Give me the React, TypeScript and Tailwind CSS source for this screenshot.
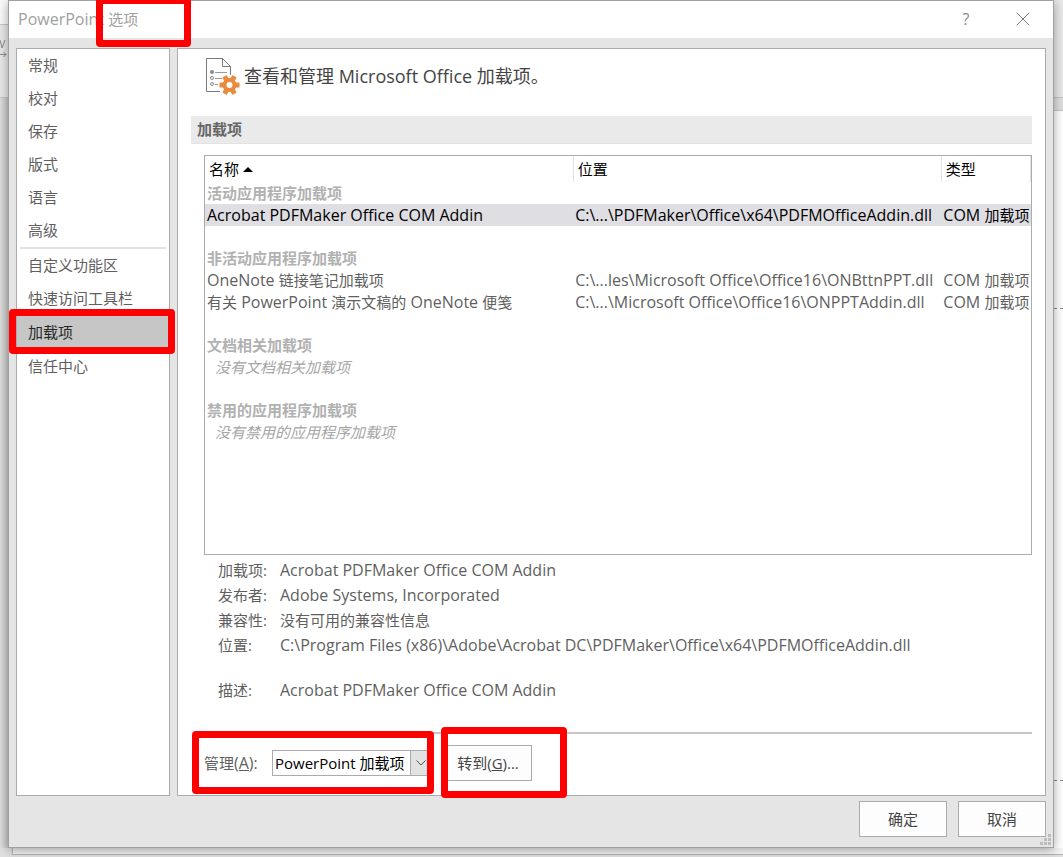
import { useState } from 'react'
import { X } from 'lucide-react'

type Row =
  | { kind: 'group'; name: string }
  | { kind: 'addin'; name: string; location: string; type: string }
  | { kind: 'empty'; name: string }
  | { kind: 'gap' }

const mainTabs = ['常规', '校对', '保存', '版式', '语言', '高级']
const extraTabs = ['自定义功能区', '快速访问工具栏', '加载项', '信任中心']

const rows: Row[] = [
  { kind: 'group', name: '活动应用程序加载项' },
  { kind: 'addin', name: 'Acrobat PDFMaker Office COM Addin', location: 'C:\\...\\PDFMaker\\Office\\x64\\PDFMOfficeAddin.dll', type: 'COM 加载项' },
  { kind: 'gap' },
  { kind: 'group', name: '非活动应用程序加载项' },
  { kind: 'addin', name: 'OneNote 链接笔记加载项', location: 'C:\\...les\\Microsoft Office\\Office16\\ONBttnPPT.dll', type: 'COM 加载项' },
  { kind: 'addin', name: '有关 PowerPoint 演示文稿的 OneNote 便笺', location: 'C:\\...\\Microsoft Office\\Office16\\ONPPTAddin.dll', type: 'COM 加载项' },
  { kind: 'gap' },
  { kind: 'group', name: '文档相关加载项' },
  { kind: 'empty', name: '没有文档相关加载项' },
  { kind: 'gap' },
  { kind: 'group', name: '禁用的应用程序加载项' },
  { kind: 'empty', name: '没有禁用的应用程序加载项' },
]

const details = [
  { label: '加载项:', value: 'Acrobat PDFMaker Office COM Addin' },
  { label: '发布者:', value: 'Adobe Systems, Incorporated' },
  { label: '兼容性:', value: '没有可用的兼容性信息' },
  { label: '位置:', value: 'C:\\Program Files (x86)\\Adobe\\Acrobat DC\\PDFMaker\\Office\\x64\\PDFMOfficeAddin.dll' },
]

// Latin runs are set one step larger than the Chinese around them
function Mixed({ text }: { text: string }) {
  const runs = text.split(/([\u4e00-\u9fff]+)/).filter(Boolean)
  return (
    <>
      {runs.map((run, i) =>
        /[\u4e00-\u9fff]/.test(run) ? run : <span key={i} className="text-base leading-5">{run}</span>
      )}
    </>
  )
}

// Red frame drawn over whatever it is placed in
function Mark({ className }: { className: string }) {
  return <div className={`absolute z-10 border-7 border-[#ff0000] rounded pointer-events-none ${className}`} />
}

function AddinIcon() {
  return (
    <svg width="34" height="37" viewBox="0 0 34 37" fill="none" aria-hidden="true">
      <path d="M14 33.5H.5V.5H16.5L24.5 8.5V17" stroke="#7a7a7a" />
      <path d="M16.5 .5V8.5H24.5" stroke="#7a7a7a" />
      <circle cx="6" cy="14" r="2" fill="#8a8a8a" />
      <circle cx="6" cy="20" r="1.5" stroke="#8a8a8a" />
      <circle cx="6" cy="26" r="1.5" stroke="#8a8a8a" />
      <path d="M9 14.5H21M9 20.5H16M9 26.5H12" stroke="#9a9a9a" />
      <g fill="#e88b3e">
        <circle cx="23.5" cy="27" r="7" />
        <rect x="21" y="17" width="5" height="20" rx=".5" transform="rotate(30 23.5 27)" />
        <rect x="21" y="17" width="5" height="20" rx=".5" transform="rotate(90 23.5 27)" />
        <rect x="21" y="17" width="5" height="20" rx=".5" transform="rotate(150 23.5 27)" />
      </g>
      <circle cx="23.5" cy="27" r="3" fill="#fff" />
    </svg>
  )
}

function Sidebar({ active, onSelect }: { active: string; onSelect: (tab: string) => void }) {
  const tab = (name: string) =>
    name === active ? (
      <div key={name} className="relative py-px">
        <button onClick={() => onSelect(name)} className="block w-full h-[33px] pl-[11px] pb-0.5 text-left bg-[#c6c6c6] text-[#262626]">{name}</button>
        <Mark className="-left-2 -right-1.5 -top-1.5 -bottom-1" />
      </div>
    ) : (
      <button key={name} onClick={() => onSelect(name)} className="block w-full h-[33px] pl-[11px] pb-0.5 text-left">{name}</button>
    )

  return (
    <nav className="w-[154px] shrink-0 bg-white border border-[#ababab]">
      {mainTabs.map(tab)}
      <hr className="mx-[3px] border-0 h-0.5 bg-[#e2e2e2]" />
      {extraTabs.map(tab)}
    </nav>
  )
}

function AddinTable() {
  const [selected, setSelected] = useState('Acrobat PDFMaker Office COM Addin')

  return (
    <table className="w-full table-fixed whitespace-nowrap">
      <colgroup>
        <col className="w-[44.6%]" />
        <col className="w-[44.6%]" />
        <col />
      </colgroup>
      <thead>
        <tr className="h-[26px] text-black text-left">
          <th className="p-0 pl-1 font-normal border-r border-[#e2e2e2]">
            <button className="flex items-center gap-1">
              名称
              <svg width="10" height="5" viewBox="0 0 10 5" aria-hidden="true"><path d="M0 5L5 0L10 5Z" fill="#000" /></svg>
            </button>
          </th>
          <th className="p-0 pl-1 font-normal border-r border-[#e2e2e2]">位置</th>
          <th className="p-0 pl-1 font-normal border-r border-[#e2e2e2]">类型</th>
        </tr>
      </thead>
      <tbody>
        {rows.map((row, i) => {
          if (row.kind === 'gap') return <tr key={i} className="h-[21px]"><td colSpan={3} className="p-0" /></tr>
          if (row.kind === 'group') return <tr key={i} className="h-[22px]"><th colSpan={3} className="p-0 pl-0.5 text-left font-bold text-[#b1b1b1]">{row.name}</th></tr>
          if (row.kind === 'empty') return <tr key={i} className="h-[22px]"><td colSpan={3} className="p-0 pl-2.5 italic text-[#a6a6a6]">{row.name}</td></tr>
          return (
            <tr key={i} onClick={() => setSelected(row.name)} className={`h-[22px] ${row.name === selected ? 'bg-[#dfdee3] text-black' : ''}`}>
              <td className="p-0 pl-0.5"><Mixed text={row.name} /></td>
              <td className="p-0 pl-0.5"><Mixed text={row.location} /></td>
              <td className="p-0 pl-0.5"><Mixed text={row.type} /></td>
            </tr>
          )
        })}
      </tbody>
    </table>
  )
}

export default function App() {
  const [active, setActive] = useState('加载项')

  return (
    <div className="min-h-screen flex flex-col bg-[#e0e0e0] overflow-hidden text-[15px] leading-5 text-[#5f5f5f] font-['Open_Sans','Noto_Sans_CJK_SC',sans-serif]">
      <div className="flex-1 flex">
        {/* window behind, left edge */}
        <div className="w-2 shrink-0 flex flex-col">
          <div className="h-[25px] bg-[#fafafa] border-b border-[#c6c6c6]" />
          <div className="h-[73px] pt-3 bg-[#e8e8e8] border-b border-[#c6c6c6]">
            <svg width="8" height="22" viewBox="0 0 8 22" fill="none" stroke="#8a8a8a" aria-hidden="true">
              <path d="M0 3L2 11L5 3M0 17.5H6M3.5 15L6 17.5L3.5 20" />
            </svg>
          </div>
          <div className="flex-1 bg-linear-to-r from-[#dedede] to-[#c8c8c8]" />
        </div>

        <div className="relative flex-1 min-w-0 flex flex-col bg-[#e5e5e5] border border-[#a0a0a0] shadow-[0_2px_10px_rgba(0,0,0,0.35)]">
          <header className="relative h-[37px] pl-[9px] pr-[18px] pb-0.5 flex items-center bg-white text-[#a0a0a0]">
            <h1 className="flex-1"><Mixed text="PowerPoint 选项" /></h1>
            <Mark className="left-[87px] w-[95px] -top-1 -bottom-[9px]" />
            <button aria-label="帮助" className="w-6 mr-[33px] text-center text-base text-[#8a8a8a]">?</button>
            <button aria-label="关闭"><X size={24} strokeWidth={1} className="text-[#7a7a7a]" /></button>
          </header>

          <div className="flex-1 flex gap-[7px] px-[7px] pt-2.5">
            <Sidebar active={active} onSelect={setActive} />

            <main className="flex-1 min-w-0 flex flex-col px-[13px] bg-white border border-[#ababab]">
              <div className="h-[67px] pt-[9px] pl-[15px] flex items-start gap-1">
                <AddinIcon />
                <h2 className="pt-1.5 text-lg leading-6 text-[#444444]">查看和管理 Microsoft Office 加载项。</h2>
              </div>
              <h3 className="h-7 pl-1.5 pb-0.5 flex items-center font-bold bg-[#eaeaea] border-b border-[#e2e2e2] text-[#666666]">加载项</h3>

              <div className="flex-1 flex flex-col pl-[13px] pt-[11px]">
                <div className="flex-1 border border-[#ababab]">
                  <AddinTable />
                </div>

                <dl className="pt-0.5 pl-3.5 h-[177px]">
                  {details.map(d => (
                    <div key={d.label} className="flex h-[25px] items-center">
                      <dt className="w-[62px]">{d.label}</dt>
                      <dd><Mixed text={d.value} /></dd>
                    </div>
                  ))}
                  <div className="flex h-[25px] items-center mt-5">
                    <dt className="w-[62px]">描述:</dt>
                    <dd><Mixed text="Acrobat PDFMaker Office COM Addin" /></dd>
                  </div>
                </dl>

                <div className="h-[63px] pb-[3px] flex items-center gap-3 border-t-2 border-[#c6c6c6]">
                  <div className="relative h-[49px] flex items-center">
                    <label htmlFor="manage" className="w-[68px]">管理<span className="text-base leading-5">(<u>A</u>):</span></label>
                    <div className="relative">
                      <select id="manage" className="block appearance-none w-[160px] h-[26px] pl-0.5 pr-6 bg-white border border-[#ababab] text-black">
                        <option>PowerPoint 加载项</option>
                      </select>
                      <span className="absolute right-px top-px bottom-px w-[21px] flex items-center justify-center bg-[#e2e2e2] border-l border-[#ababab] pointer-events-none">
                        <svg width="10" height="6" viewBox="0 0 10 6" fill="none" stroke="#555" aria-hidden="true"><path d="M.5 .5L5 5L9.5 .5" /></svg>
                      </span>
                    </div>
                    <Mark className="-left-3 -right-0.5 -top-2 -bottom-1.5" />
                  </div>
                  <div className="relative">
                    <button className="w-[88px] h-9 border border-[#ababab] bg-[#fdfdfd] text-[#444444]">转到(<u>G</u>)...</button>
                    <Mark className="-left-[3px] -right-[35px] -top-[18px] -bottom-[17px]" />
                  </div>
                </div>
              </div>
            </main>
          </div>

          <footer className="flex justify-end gap-[11px] pt-[5px] pb-2.5 pr-[7px]">
            <button className="w-[88px] h-9 border border-[#ababab] bg-[#fdfdfd] text-[#444444]">确定</button>
            <button className="w-[88px] h-9 border border-[#ababab] bg-[#fdfdfd] text-[#444444]">取消</button>
          </footer>
          <svg width="11" height="11" viewBox="0 0 11 11" fill="#bdbdbd" className="absolute right-0.5 bottom-0.5" aria-hidden="true">
            <path d="M8 0h3v3h-3zM4 4h3v3h-3zM8 4h3v3h-3zM0 8h3v3h-3zM4 8h3v3h-3zM8 8h3v3h-3z" />
          </svg>
        </div>

        {/* window behind, right edge */}
        <div className="w-[9px] shrink-0 flex flex-col bg-white">
          <div className="h-[98px] bg-[#e8e8e8] border-b border-[#c6c6c6]" />
          <div className="h-[13px] bg-[#dedede] border-b border-[#c6c6c6]" />
          <div className="h-[198px] border-b border-dashed border-[#8a8a8a]" />
          <div className="h-[472px] border-b border-dashed border-[#8a8a8a]" />
        </div>
      </div>
      <div className="h-[7px] ml-3 bg-[#f3f3f3] border-l border-b border-[#b4b4b4]" />
      <div className="h-0.5" />
    </div>
  )
}
